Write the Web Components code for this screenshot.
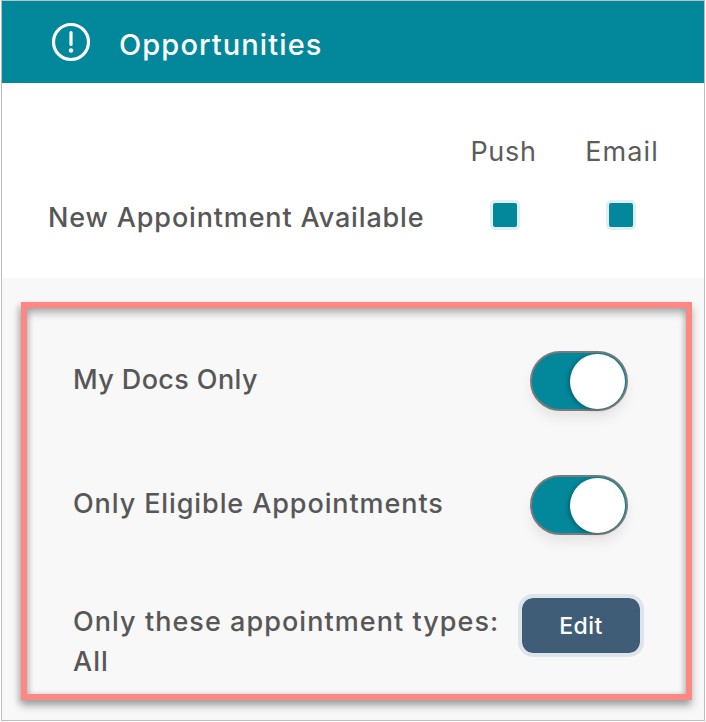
<!DOCTYPE html>
<html>
<head>
<meta charset="utf-8">
<style>
  html, body { margin: 0; background: #fff; }
  body { width: 706px; height: 722px; overflow: hidden; font-family: Inter, "Noto Sans", sans-serif; color: #575757; }
</style>
</head>
<body>
<notify-panel>
  <panel-header slot="header">Opportunities</panel-header>
  <channel-row slot="channels" label="New Appointment Available"></channel-row>
  <filter-box slot="filters">
    <filter-row style="letter-spacing: .4px" label="My Docs Only"><toggle-switch></toggle-switch></filter-row>
    <filter-row style="letter-spacing: .9px" label="Only Eligible Appointments"><toggle-switch></toggle-switch></filter-row>
    <filter-row style="letter-spacing: 1.05px" class="types" label="Only these appointment types: All"><edit-button>Edit</edit-button></filter-row>
  </filter-box>
</notify-panel>

<script>
class NotifyPanel extends HTMLElement {
  constructor() {
    super();
    this.attachShadow({ mode: "open" });
    this.shadowRoot.innerHTML = `
      <style>
        :host { display: flex; flex-direction: column; box-sizing: border-box; width: 704px; height: 721px; margin-left: 1px;
                border: 1px solid #bdbdbd; border-top-color: #b5c4c8; background: #f8f8f8; }
        .top { background: #fff; height: 195px; flex: none; }
      </style>
      <slot name="header"></slot>
      <div class="top"><slot name="channels"></slot></div>
      <slot name="filters"></slot>`;
  }
}

class PanelHeader extends HTMLElement {
  constructor() {
    super();
    this.attachShadow({ mode: "open" });
    this.shadowRoot.innerHTML = `
      <style>
        :host { display: flex; align-items: center; gap: 28px; box-sizing: border-box; height: 82px; padding: 0 0 0 49px;
                background: #02879b; color: #fff; font-size: 29px; font-weight: 500; letter-spacing: 1.1px; flex: none; }
        svg { width: 40px; height: 40px; flex: none; margin-top: -1px; }
        span { padding-top: 4px; }
      </style>
      <svg viewBox="0 0 40 40" fill="none" stroke="#fff">
        <circle cx="20" cy="20" r="17.5" stroke-width="3.2"/>
        <path d="M20 10.5V22.5" stroke-width="3.2" stroke-linecap="round"/>
        <circle cx="20" cy="28.5" r="2.2" fill="#fff" stroke="none"/>
      </svg>
      <span><slot></slot></span>`;
  }
}

class ChannelRow extends HTMLElement {
  constructor() {
    super();
    this.attachShadow({ mode: "open" });
    this.shadowRoot.innerHTML = `
      <style>
        :host { display: grid; grid-template-columns: 399px 116px 116px; grid-template-rows: 37px 30px;
                row-gap: 32px; padding: 50px 0 0 46px; font-size: 27px; }
        .head { justify-self: center; align-self: center; color: #5c5c5c; font-weight: 400; letter-spacing: .7px; margin-right: 3px; }
        .head.email { letter-spacing: 1.1px; margin-left: 2px; margin-right: 0; }
        .name { font-weight: 500; align-self: center; letter-spacing: .85px; white-space: nowrap; }
        .box { justify-self: center; align-self: center; margin-top: -4px; }
        i { display: block; width: 24px; height: 24px; border-radius: 5px; background: #02879b;
            border: 3px solid #dceff2; }
      </style>
      <span></span>
      <span class="head">Push</span>
      <span class="head email">Email</span>
      <span class="name"></span>
      <span class="box"><i></i></span>
      <span class="box"><i></i></span>`;
    this.shadowRoot.querySelector(".name").textContent = this.getAttribute("label");
  }
}

class FilterBox extends HTMLElement {
  constructor() {
    super();
    this.attachShadow({ mode: "open" });
    this.shadowRoot.innerHTML = `
      <style>
        :host { display: block; box-sizing: border-box; width: 671px; height: 398px; margin: 24px 0 0 19px;
                border: 6px solid #fb8883; padding: 43px 0 0 46px;
                box-shadow: 0 6px 8px rgba(0,0,0,.28), -3px 3px 6px rgba(0,0,0,.14),
                            inset 0 6px 7px rgba(0,0,0,.24), inset 3px 0 5px rgba(0,0,0,.10), inset -3px 0 5px rgba(0,0,0,.10); }
      </style>
      <slot></slot>`;
  }
}

class FilterRow extends HTMLElement {
  constructor() {
    super();
    this.attachShadow({ mode: "open" });
    this.shadowRoot.innerHTML = `
      <style>
        :host { display: flex; align-items: center; justify-content: space-between; width: 555px; height: 60px; margin-bottom: 64px;
                font-size: 27px; font-weight: 500; }
        .label { margin-top: -4px; }
        :host(.types) { width: 571px; height: 80px; margin: 67px 0 0; align-items: flex-start; line-height: 40px; }
        :host(.types) .label { width: 440px; margin-top: 0; }
      </style>
      <span class="label"></span>
      <slot></slot>`;
    this.shadowRoot.querySelector(".label").textContent = this.getAttribute("label");
  }
}

class ToggleSwitch extends HTMLElement {
  constructor() {
    super();
    this.attachShadow({ mode: "open" });
    this.shadowRoot.innerHTML = `
      <style>
        :host { display: flex; justify-content: flex-end; align-items: center; box-sizing: border-box; width: 98px; height: 60px;
                border-radius: 30px; background: #02879b; border: 2px solid #7b7b7b;
                box-shadow: 0 8px 12px rgba(0,0,0,.07); }
        b { display: block; width: 55px; height: 55px; margin-right: 1px; border-radius: 50%; background: #fff;
            box-shadow: -2px 1px 4px rgba(0,0,0,.25); }
      </style>
      <b></b>`;
  }
}

class EditButton extends HTMLElement {
  constructor() {
    super();
    this.attachShadow({ mode: "open" });
    this.shadowRoot.innerHTML = `
      <style>
        :host { display: flex; align-items: center; justify-content: center; width: 118px; height: 55px;
                border: 4px solid #dde5ea; border-radius: 15px; background: #405d77; background-clip: padding-box;
                color: #fff; font-size: 23px; font-weight: 500; letter-spacing: .5px; margin-top: -8px; }
      </style>
      <slot></slot>`;
  }
}

customElements.define("notify-panel", NotifyPanel);
customElements.define("panel-header", PanelHeader);
customElements.define("channel-row", ChannelRow);
customElements.define("filter-box", FilterBox);
customElements.define("filter-row", FilterRow);
customElements.define("toggle-switch", ToggleSwitch);
customElements.define("edit-button", EditButton);
</script>
</body>
</html>
